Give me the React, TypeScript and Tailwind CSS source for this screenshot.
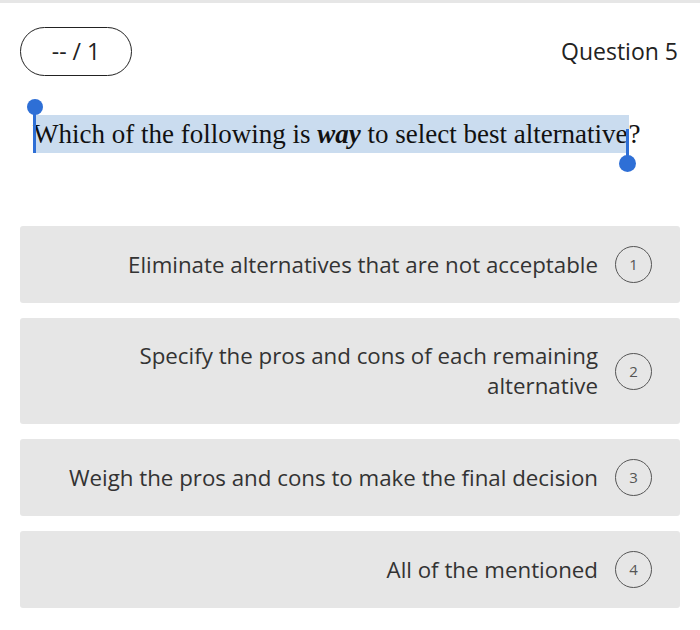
import React from "react";

const options = [
  { n: 1, text: "Eliminate alternatives that are not acceptable", h: "h-[77px]" },
  { n: 2, text: "Specify the pros and cons of each remaining alternative", h: "h-[106px]" },
  { n: 3, text: "Weigh the pros and cons to make the final decision", h: "h-[77px]" },
  { n: 4, text: "All of the mentioned", h: "h-[77px]" },
];

export default function App() {
  return (
    <div className="w-[700px] h-[630px] bg-white overflow-hidden" style={{ fontFamily: '"Open Sans", sans-serif' }}>
      <div className="h-[3px] bg-[#e6e6e6]" />
      <div className="flex items-center justify-between pl-[20px] pr-[22px] mt-[24px]">
        <div className="w-[112px] h-[49px] rounded-full border-[1.5px] border-[#222] flex items-center justify-center text-[23px] text-[#222]">
          -- / 1
        </div>
        <div className="text-[23px] text-[#222]">Question 5</div>
      </div>
      <div className="pl-[33px] mt-[39px] h-[80px]">
        <div className="relative inline-block" style={{ fontFamily: '"Liberation Serif", serif' }}>
          <span className="text-[27px] leading-[38px] text-[#111] bg-[#cadcef] inline-block pr-[1px]">
            Which of the following is <b><i>way</i></b> to select best alternative
          </span>
          <span className="text-[27px] leading-[38px] text-[#111]">?</span>
          <div className="absolute left-[0px] top-[-8px] w-[3px] h-[46px] bg-[#2e6fd6]" />
          <div className="absolute left-[-6px] top-[-16px] w-[16px] h-[16px] rounded-full bg-[#2e6fd6]" />
          <div className="absolute right-[12px] top-[14px] w-[3px] h-[34px] bg-[#2e6fd6]" />
          <div className="absolute right-[5px] top-[40px] w-[17px] h-[17px] rounded-full bg-[#2e6fd6]" />
        </div>
      </div>
      <div className="px-[20px] mt-[31px] flex flex-col gap-[15px]">
        {options.map((o) => (
          <div key={o.n} className={`${o.h} bg-[#e6e6e6] rounded-[3px] flex items-center justify-end pr-[28px]`}>
            <div className="text-[22.3px] leading-[30px] text-[#333] text-right max-w-[545px]">{o.text}</div>
            <div className="ml-[17px] w-[37px] h-[37px] shrink-0 rounded-full border-[1.5px] border-[#555] flex items-center justify-center text-[15px] text-[#555]">
              {o.n}
            </div>
          </div>
        ))}
      </div>
    </div>
  );
}
